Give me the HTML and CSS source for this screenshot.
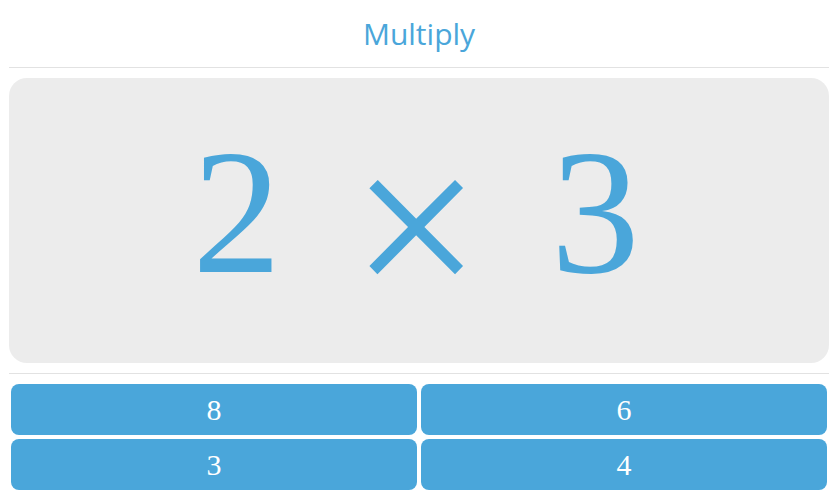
FILE: index.html
```html
<!DOCTYPE html>
<html lang="en">
<head>
    <meta charset="UTF-8">
    <meta name="viewport" content="width=device-width, initial-scale=1.0">
    <title>Multiply</title>
    <link rel="stylesheet" href="styles.css">
</head>
<body>
    <div class="app">
        <header class="title-bar">
            <h1>Multiply</h1>
        </header>

        <div class="question">
            <span class="num">2</span>
            <span class="op">×</span>
            <span class="num">3</span>
        </div>

        <div class="divider"></div>

        <div class="answers">
            <button class="answer">8</button>
            <button class="answer">6</button>
            <button class="answer">3</button>
            <button class="answer">4</button>
        </div>
    </div>
</body>
</html>
```

FILE: styles.css
```css
body {
    margin: 0;
    background-color: #fff;
    font-family: "Liberation Serif", serif;
}

.app {
    width: 820px;
    margin-left: 9px;
}

.title-bar {
    height: 67px;
    border-bottom: 1px solid #e2e2e2;
    display: flex;
    justify-content: center;
    align-items: center;
}

h1 {
    margin: 0;
    font-family: "Open Sans", sans-serif;
    font-weight: normal;
    font-size: 30px;
    color: #4aa6da;
}

.question {
    margin-top: 10px;
    height: 268px;
    padding-bottom: 17px;
    padding-right: 6px;
    background-color: #ececec;
    border-radius: 18px;
    display: flex;
    justify-content: center;
    align-items: center;
    gap: 70px;
    color: #4aa6da;
    font-family: "Liberation Serif", serif;
    font-size: 178px;
    line-height: 1;
}

.op {
    font-size: 230px;
    margin-top: 30px;
}

.divider {
    margin-top: 10px;
    height: 1px;
    background-color: #e2e2e2;
}

.answers {
    margin-top: 10px;
    padding: 0 2px;
    display: grid;
    grid-template-columns: 1fr 1fr;
    gap: 4px;
}

.answer {
    height: 51px;
    border: none;
    border-radius: 8px;
    background-color: #4aa6da;
    color: #fff;
    font-family: "Liberation Serif", serif;
    font-size: 30px;
    padding: 0;
    cursor: pointer;
}
```
